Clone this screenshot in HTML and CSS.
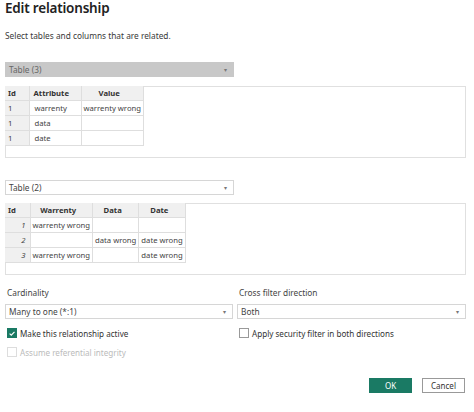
FILE: index.html
```html
<!DOCTYPE html>
<html lang="en">
<head>
    <meta charset="UTF-8">
    <title>Edit relationship</title>
    <link rel="stylesheet" href="styles.css">
</head>
<body>

    <div class="dialog">
        <h1>Edit relationship</h1>
        <p class="subtitle">Select tables and columns that are related.</p>

        <div class="select disabled">
            <span>Table (3)</span>
            <span class="arrow">&#9662;</span>
        </div>

        <div class="preview">
            <table class="grid first">
                <colgroup>
                    <col style="width:24px">
                    <col style="width:52px">
                    <col style="width:62px">
                </colgroup>
                <tr>
                    <th class="id">Id</th>
                    <th class="left">Attribute</th>
                    <th>Value</th>
                </tr>
                <tr>
                    <td class="id">1</td>
                    <td class="pad">warrenty</td>
                    <td>warrenty wrong</td>
                </tr>
                <tr>
                    <td class="id">1</td>
                    <td class="pad">data</td>
                    <td></td>
                </tr>
                <tr>
                    <td class="id">1</td>
                    <td class="pad">date</td>
                    <td></td>
                </tr>
            </table>
        </div>

        <div class="select">
            <span>Table (2)</span>
            <span class="arrow">&#9662;</span>
        </div>

        <div class="preview">
            <table class="grid second">
                <colgroup>
                    <col style="width:25px">
                    <col style="width:62px">
                    <col style="width:46px">
                    <col style="width:47px">
                </colgroup>
                <tr>
                    <th class="id">Id</th>
                    <th>Warrenty</th>
                    <th>Data</th>
                    <th>Date</th>
                </tr>
                <tr>
                    <td class="id num">1</td>
                    <td>warrenty wrong</td>
                    <td></td>
                    <td></td>
                </tr>
                <tr>
                    <td class="id num">2</td>
                    <td></td>
                    <td>data wrong</td>
                    <td>date wrong</td>
                </tr>
                <tr>
                    <td class="id num">3</td>
                    <td>warrenty wrong</td>
                    <td></td>
                    <td>date wrong</td>
                </tr>
            </table>
        </div>

        <div class="options">
            <div class="option-col">
                <label class="field-label">Cardinality</label>
                <div class="select">
                    <span>Many to one (*:1)</span>
                    <span class="arrow">&#9662;</span>
                </div>
                <div class="check">
                    <span class="box checked">
                        <svg width="9" height="9" viewBox="0 0 9 9"><path d="M1.8 4.6 L3.7 6.4 L7.3 2.6" fill="none" stroke="#fff" stroke-width="1.3"/></svg>
                    </span>
                    <span>Make this relationship active</span>
                </div>
                <div class="check muted">
                    <span class="box"></span>
                    <span>Assume referential integrity</span>
                </div>
            </div>
            <div class="option-col">
                <label class="field-label">Cross filter direction</label>
                <div class="select">
                    <span>Both</span>
                    <span class="arrow">&#9662;</span>
                </div>
                <div class="check">
                    <span class="box"></span>
                    <span>Apply security filter in both directions</span>
                </div>
            </div>
        </div>

        <div class="actions">
            <button class="btn primary">OK</button>
            <button class="btn">Cancel</button>
        </div>
    </div>

</body>
</html>
```

FILE: styles.css
```css
body {
    margin: 0;
    padding: 0;
    background-color: #fff;
    color: #333;
    font-family: 'Noto Sans', 'Open Sans', sans-serif;
    font-size: 8.3px;
}

.dialog {
    padding: 0 8px 0 5px;
}

h1 {
    margin: 0;
    font-size: 13.5px;
    font-weight: 600;
    line-height: 16px;
    letter-spacing: -0.2px;
    color: #222;
}

.subtitle {
    margin: 14px 0 0 0;
    line-height: 12px;
    color: #3a3a3a;
}

.select {
    display: flex;
    justify-content: space-between;
    align-items: center;
    height: 13px;
    border: 1px solid #d6d6d6;
    padding: 0 6px 0 3px;
    width: 218px;
    color: #444;
    background-color: #fff;
}

.select.disabled {
    margin-top: 20px;
    background-color: #c8c8c8;
    border-color: #c8c8c8;
    color: #666;
}

.arrow {
    font-size: 6px;
    color: #777;
}

.preview {
    margin-top: 9px;
    height: 71px;
    border: 1px solid #e0e0e0;
    border-left: none;
    border-top: none;
    box-shadow: inset 0 1px 0 #e0e0e0, inset 1px 0 0 #e0e0e0;
}

.preview + .select {
    margin-top: 22px;
}

.preview + .select + .preview {
    margin-top: 8px;
}

.grid {
    border-collapse: collapse;
    table-layout: fixed;
    font-size: 7.7px;
    color: #444;
}

.grid th,
.grid td {
    height: 14px;
    padding: 0 2px;
    border: 1px solid #dedede;
    white-space: nowrap;
    overflow: hidden;
}

.grid th {
    background-color: #f0f0f0;
    font-weight: 700;
    color: #333;
    text-align: center;
    padding-right: 8px;
}

.grid th.left {
    text-align: left;
    padding-left: 4px;
}

.grid th.id {
    text-align: left;
    padding-left: 3px;
}

.grid td.id {
    background-color: #f0f0f0;
    padding-left: 3px;
}

.grid td.num {
    text-align: right;
    font-style: italic;
    padding-right: 4px;
}

.grid td.pad {
    padding-left: 5px;
}

.grid tr:first-child th {
    border-top: none;
}

.grid th:first-child,
.grid td:first-child {
    border-left: none;
}

.options {
    display: grid;
    grid-template-columns: 228px 229px;
    gap: 4px;
    margin-top: 11px;
}

.option-col .select {
    width: auto;
}

.field-label {
    display: block;
    line-height: 14px;
    padding-left: 2px;
    margin-bottom: 4px;
    color: #444;
}

.check {
    display: flex;
    align-items: center;
    gap: 3px;
    margin-top: 9px;
    padding-left: 2px;
    height: 10px;
    font-size: 8.1px;
    color: #333;
}

.check + .check {
    margin-top: 9px;
}

.check.muted {
    color: #bbb;
}

.box {
    width: 8px;
    height: 8px;
    border: 1px solid #999;
    display: flex;
    align-items: center;
    justify-content: center;
    background-color: #fff;
}

.box.checked {
    background-color: #1a7a64;
    border-color: #1a7a64;
}

.check.muted .box {
    border-color: #ddd;
}

.actions {
    display: flex;
    justify-content: flex-end;
    gap: 10px;
    margin-top: 21px;
    padding-right: 1px;
}

.btn {
    width: 43px;
    height: 15px;
    padding: 0;
    font-family: inherit;
    font-size: 8px;
    border: 1px solid #999;
    background-color: #fff;
    color: #333;
}

.btn.primary {
    background-color: #1a7a64;
    border-color: #1a7a64;
    color: #fff;
}
```
